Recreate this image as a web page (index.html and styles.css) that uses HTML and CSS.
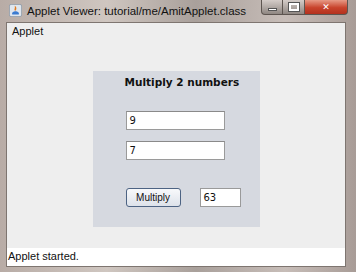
FILE: index.html
```html
<!DOCTYPE html>
<html lang="en">
<head>
    <meta charset="UTF-8">
    <title>Applet Viewer</title>
    <link rel="stylesheet" href="styles.css">
</head>
<body>
    <div class="window">
        <div class="titlebar">
            <div class="title">
                <svg class="app-icon" width="13" height="13" viewBox="0 0 16 16">
                    <rect x="0.5" y="0.5" width="15" height="15" rx="2" fill="#dfe6ee" stroke="#8d9aa8"/>
                    <path d="M4 13 C3 10 6 9 8 9 C10 9 13 10 12 13 Z" fill="#3b7bd0"/>
                    <path d="M7 8 C6 6 8 5 7 2 C10 4 9 6 8.5 8 Z" fill="#e07a20"/>
                </svg>
                <span>Applet Viewer: tutorial/me/AmitApplet.class</span>
            </div>
            <div class="controls">
                <div class="ctl min"><span class="min-bar"></span></div>
                <div class="ctl max"><span class="max-box"></span></div>
                <div class="ctl close">&#x2715;</div>
            </div>
        </div>
        <div class="client">
            <div class="menubar">Applet</div>
            <div class="applet">
                <div class="panel">
                    <h1 class="heading">Multiply 2 numbers</h1>
                    <div class="field">9</div>
                    <div class="field">7</div>
                    <div class="actions">
                        <button class="btn">Multiply</button>
                        <div class="result">63</div>
                    </div>
                </div>
            </div>
            <div class="status">Applet started.</div>
        </div>
    </div>
</body>
</html>
```
FILE: styles.css
```css
* {
    margin: 0;
    padding: 0;
    box-sizing: border-box;
}

body {
    width: 356px;
    height: 272px;
    overflow: hidden;
    font-family: "DejaVu Sans", sans-serif;
    background: #6e6560;
}

.window {
    width: 356px;
    height: 272px;
    display: flex;
    flex-direction: column;
    background: linear-gradient(90deg, #b8aca6 0%, #cfc6c0 30%, #a9a09b 55%, #c7bdb8 80%, #a89c97 100%);
    padding: 0 10px 5px 6px;
}

.titlebar {
    height: 22px;
    display: flex;
    justify-content: space-between;
    align-items: flex-start;
    flex-shrink: 0;
}

.title {
    display: flex;
    align-items: center;
    gap: 5px;
    height: 21px;
    padding-left: 3px;
    font-family: "Liberation Sans", sans-serif;
    font-size: 11.5px;
    color: #111;
}

.app-icon {
    flex-shrink: 0;
}

.controls {
    display: flex;
    margin-right: -2px;
}

.ctl {
    height: 15px;
    display: flex;
    align-items: center;
    justify-content: center;
    border: 1px solid #5d5550;
    border-top: none;
}

.min {
    width: 22px;
    border-radius: 0 0 0 4px;
    background: linear-gradient(#d4ccc8, #8f8782);
}

.max {
    width: 22px;
    border-left: none;
    background: linear-gradient(#d4ccc8, #8f8782);
}

.close {
    width: 43px;
    border-left: none;
    border-radius: 0 0 4px 0;
    background: linear-gradient(#e79a86, #c8432c 55%, #b3311e);
    color: #fff;
    font-size: 9px;
    font-weight: bold;
}

.min-bar {
    width: 9px;
    height: 3px;
    background: #fff;
    border: 1px solid #555;
    margin-top: 5px;
}

.max-box {
    width: 10px;
    height: 8px;
    border: 2px solid #fff;
    outline: 1px solid #555;
}

.client {
    flex: 1;
    display: flex;
    flex-direction: column;
    background: #eeeeee;
    border: 1px solid #7e7570;
}

.menubar {
    height: 16px;
    padding: 2px 0 0 5px;
    font-family: "Liberation Sans", sans-serif;
    font-size: 11px;
    color: #111;
}

.applet {
    flex: 1;
    display: flex;
    justify-content: center;
    padding: 32px 0 0 0;
}

.panel {
    width: 167px;
    height: 156px;
    background: #d6d9e0;
    display: flex;
    flex-direction: column;
    padding: 5px 0 0 33px;
}

.heading {
    font-family: "DejaVu Sans", sans-serif;
    font-size: 10.5px;
    font-weight: bold;
    color: #111;
    margin-left: -1px;
    height: 14px;
    margin-bottom: 21px;
}

.field {
    width: 99px;
    height: 19px;
    background: #fff;
    border: 1px solid #9a9a9a;
    border-top-color: #8a8a8a;
    font-size: 10px;
    padding: 3px 0 0 3px;
    color: #111;
    margin-bottom: 11px;
}

.actions {
    display: flex;
    align-items: center;
    gap: 19px;
    margin-top: 17px;
}

.btn {
    width: 55px;
    height: 19px;
    border: 1px solid #4d6383;
    border-radius: 3px;
    background: linear-gradient(#f8f9fb, #dde2ea);
    font-family: "Liberation Sans", sans-serif;
    font-size: 10px;
    color: #111;
}

.result {
    width: 41px;
    height: 19px;
    background: #fff;
    border: 1px solid #9a9a9a;
    font-size: 10px;
    padding: 3px 0 0 3px;
    color: #111;
}

.status {
    height: 18px;
    background: #ffffff;
    padding: 2px 0 0 1px;
    font-family: "Liberation Sans", sans-serif;
    font-size: 11px;
    color: #111;
}
```
